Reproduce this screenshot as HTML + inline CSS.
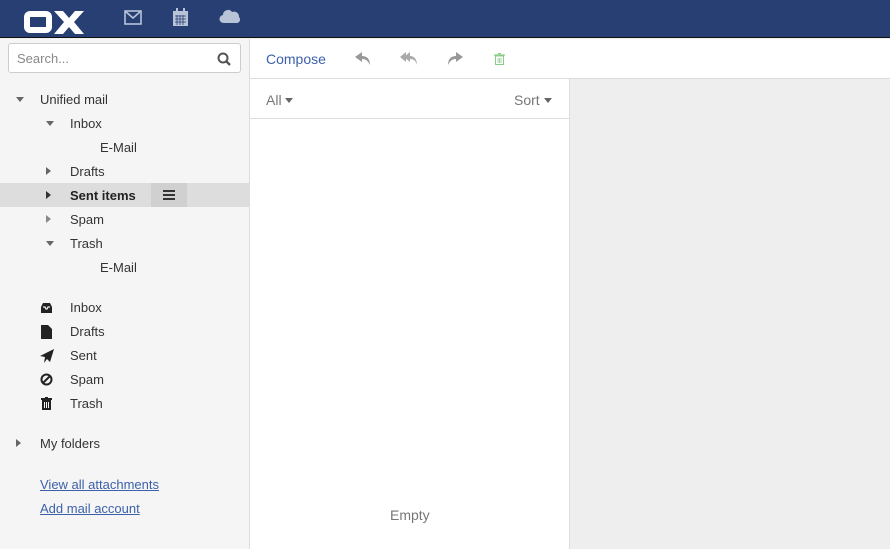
<!DOCTYPE html>
<html><head><style>
*{box-sizing:border-box;margin:0;padding:0}
body{width:890px;height:549px;overflow:hidden;font-family:"Liberation Sans",sans-serif;font-size:13px;color:#333;background:#eee;position:relative}
.top{position:absolute;left:0;top:0;width:890px;height:38px;background:#283f73;border-bottom:1px solid #111}
.side{position:absolute;left:0;top:39px;width:250px;height:510px;background:#f5f5f5;border-right:1px solid #ddd}
.search{position:absolute;left:8px;top:4px;width:233px;height:30px;border:1px solid #ccc;border-radius:3px;background:#fff;color:#888;padding:7px 8px;font-size:13px}
.tb{position:absolute;left:250px;top:39px;width:640px;height:40px;background:#fff;border-bottom:1px solid #ddd}
.list{position:absolute;left:250px;top:79px;width:320px;height:470px;background:#fff;border-right:1px solid #ddd}
.it{position:absolute;height:24px;line-height:26px;left:0;width:249px}
.t{position:absolute}
.tri-d{position:absolute;width:0;height:0;border-left:4px solid transparent;border-right:4px solid transparent;border-top:5px solid #666;top:10px}
.tri-r{position:absolute;width:0;height:0;border-top:4px solid transparent;border-bottom:4px solid transparent;border-left:5px solid #666;top:8px}
a{color:#3c61aa;text-decoration:underline}
</style></head><body>
<div class="top">
<svg style="position:absolute;left:24px;top:11px" width="60" height="23"><rect x="3" y="3" width="22" height="16" rx="3" fill="none" stroke="#fff" stroke-width="6"/><path d="M30 0h9l6 7 6-7h9l-10 11 10 12h-9l-6-7-6 7h-9l10-12z" fill="#fff"/></svg>
<svg style="position:absolute;left:124px;top:10px" width="18" height="15"><rect x="1" y="1" width="16" height="13" fill="none" stroke="#b8c3d8" stroke-width="1.6"/><path d="M1 1 L9 8 L17 1" fill="none" stroke="#b8c3d8" stroke-width="1.6"/></svg>
<svg style="position:absolute;left:172px;top:8px" width="17" height="19"><rect x="1" y="3" width="15" height="15" fill="#b8c3d8"/><rect x="4" y="0" width="2" height="4" fill="#b8c3d8"/><rect x="11" y="0" width="2" height="4" fill="#b8c3d8"/><path d="M3 8h11M3 11h11M3 14h11M5 7v10M8 7v10M11 7v10" stroke="#283f73" stroke-width=".8"/></svg>
<svg style="position:absolute;left:219px;top:9px" width="22" height="15"><path d="M5 14 A4 4 0 0 1 4 6 A5 5 0 0 1 13 3 A5 5 0 0 1 20 8 A3.5 3.5 0 0 1 18 14Z" fill="#b8c3d8"/></svg>
</div>
<div class="side">
<div class="search">Search...<svg style="position:absolute;right:9px;top:8px" width="14" height="14"><circle cx="6" cy="6" r="4.5" fill="none" stroke="#555" stroke-width="2"/><path d="M9 9l4 4" stroke="#555" stroke-width="2.4"/></svg></div>
</div>
<div class="it" style="top:87px"><span class="tri-d" style="left:16px"></span><span class="t" style="left:40px">Unified mail</span></div>
<div class="it" style="top:111px"><span class="tri-d" style="left:46px"></span><span class="t" style="left:70px">Inbox</span></div>
<div class="it" style="top:135px"><span class="t" style="left:100px">E-Mail</span></div>
<div class="it" style="top:159px"><span class="tri-r" style="left:46px"></span><span class="t" style="left:70px">Drafts</span></div>
<div class="it" style="top:183px;background:#ddd"><span class="tri-r" style="left:46px;border-left-color:#333"></span><span class="t" style="left:70px;font-weight:bold;color:#222">Sent items</span><span style="position:absolute;left:151px;top:0;width:36px;height:24px;background:#d0d0d0"></span><svg style="position:absolute;left:163px;top:7px" width="12" height="10"><path d="M0 1h12M0 5h12M0 9h12" stroke="#333" stroke-width="2"/></svg></div>
<div class="it" style="top:207px"><span class="tri-r" style="left:46px;border-left-color:#888"></span><span class="t" style="left:70px">Spam</span></div>
<div class="it" style="top:231px"><span class="tri-d" style="left:46px"></span><span class="t" style="left:70px">Trash</span></div>
<div class="it" style="top:255px"><span class="t" style="left:100px">E-Mail</span></div>
<svg style="position:absolute;left:40px;top:302px" width="13" height="12"><path d="M1 5 L3 1 H10 L12 5 V11 H1Z" fill="#222"/><path d="M3 5h2l1 2h1l1-2h2" stroke="#f5f5f5" stroke-width="1.2" fill="none"/></svg>
<div class="it" style="top:295px"><span class="t" style="left:70px">Inbox</span></div>
<svg style="position:absolute;left:41px;top:325px" width="11" height="14"><path d="M0 0H7L11 4V14H0Z" fill="#222"/></svg>
<div class="it" style="top:319px"><span class="t" style="left:70px">Drafts</span></div>
<svg style="position:absolute;left:40px;top:349px" width="14" height="14"><path d="M14 0L0 7L5 8L4 14L7 10L10 13Z" fill="#222"/></svg>
<div class="it" style="top:343px"><span class="t" style="left:70px">Sent</span></div>
<svg style="position:absolute;left:40px;top:373px" width="13" height="13"><circle cx="6.5" cy="6.5" r="5" fill="none" stroke="#222" stroke-width="2"/><path d="M3 10L10 3" stroke="#222" stroke-width="2"/></svg>
<div class="it" style="top:367px"><span class="t" style="left:70px">Spam</span></div>
<svg style="position:absolute;left:41px;top:397px" width="11" height="13"><path d="M0 2h11M4 0h3" stroke="#222" stroke-width="2"/><path d="M1 3h9v10H1Z" fill="#222"/><path d="M3.5 5v6M5.5 5v6M7.5 5v6" stroke="#f5f5f5"/></svg>
<div class="it" style="top:391px"><span class="t" style="left:70px">Trash</span></div>
<div class="it" style="top:431px"><span class="tri-r" style="left:16px"></span><span class="t" style="left:40px">My folders</span></div>
<div class="it" style="top:472px"><a class="t" style="left:40px">View all attachments</a></div>
<div class="it" style="top:496px"><a class="t" style="left:40px">Add mail account</a></div>
<div class="tb">
<span style="position:absolute;left:16px;top:12px;color:#3c61aa;font-size:14px">Compose</span>
<svg style="position:absolute;left:105px;top:13px" width="16" height="14"><path d="M7 0L0 5L7 10V7C11 7 13 9 15 13C15 7 12 4 7 4Z" fill="#999"/></svg>
<svg style="position:absolute;left:150px;top:13px" width="18" height="14"><path d="M6 0L0 5L6 10Z" fill="#aaa"/><path d="M10 0L4 5L10 10V7C14 7 16 9 17 13C17 7 14 4 10 4Z" fill="#aaa"/></svg>
<svg style="position:absolute;left:197px;top:13px" width="16" height="14"><path d="M9 0L16 5L9 10V7C5 7 3 9 1 13C1 7 4 4 9 4Z" fill="#999"/></svg>
<svg style="position:absolute;left:244px;top:14px" width="11" height="12"><path d="M0 2h11M4 .5h3" stroke="#8c8" stroke-width="1.2"/><rect x="1.5" y="3" width="8" height="8.5" fill="none" stroke="#8c8"/><path d="M4 5v5M5.5 5v5M7 5v5" stroke="#8c8" stroke-width=".8"/></svg>
</div>
<div class="list">
<div style="position:absolute;left:0;top:0;width:319px;height:40px;border-bottom:1px solid #ddd"></div>
<span style="position:absolute;left:16px;top:13px;color:#777;font-size:14px">All</span><span class="tri-d" style="left:35px;top:19px"></span>
<span style="position:absolute;left:264px;top:13px;color:#777;font-size:14px">Sort</span><span class="tri-d" style="left:294px;top:19px"></span>
<span style="position:absolute;left:140px;top:428px;color:#777;font-size:14px">Empty</span>
</div>
</body></html>
